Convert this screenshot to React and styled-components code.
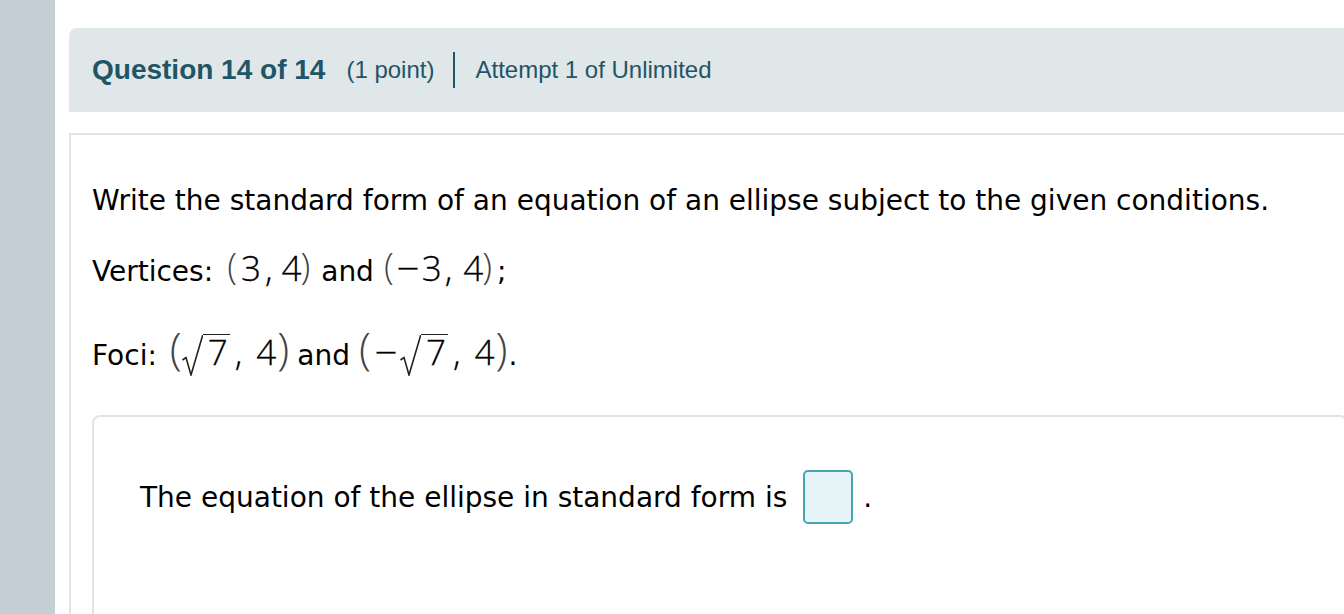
import React from 'react'
import styled, { createGlobalStyle } from 'styled-components'

const GlobalStyle = createGlobalStyle`
  html, body {
    margin: 0;
    padding: 0;
    background: #ffffff;
    overflow: hidden;
  }
`;

const Page = styled.div`
  display: flex;
  width: 1344px;
  height: 614px;
  overflow: hidden;
`;

const Sidebar = styled.div`
  width: 55px;
  flex: none;
  background: #c3cfd4;
`;

const Main = styled.div`
  flex: 1;
  padding: 28px 0 0 14px;
  display: flex;
  flex-direction: column;
  min-width: 0;
`;

const Header = styled.div`
  flex: none;
  height: 84px;
  background: #dfe7e9;
  border-top-left-radius: 8px;
  display: flex;
  align-items: center;
  padding-left: 23px;
  font-family: "Liberation Sans", Arial, sans-serif;
  color: #1f5566;
`;

const Title = styled.span`
  font-weight: bold;
  font-size: 28px;
`;

const Points = styled.span`
  font-size: 24px;
  margin-left: 21px;
`;

const Divider = styled.span`
  width: 2px;
  height: 36px;
  background: #1f5566;
  margin: 0 20px 0 19px;
`;

const Attempt = styled.span`
  font-size: 24px;
`;

const Panel = styled.div`
  margin-top: 21px;
  flex: 1;
  border-top: 2px solid #dfe6e8;
  border-left: 2px solid #dfe6e8;
  padding: 47px 0 0 21px;
  font-family: "DejaVu Sans", Verdana, sans-serif;
  font-size: 28px;
  color: #000;
`;

const Line = styled.div`
  height: 38px;
  line-height: 38px;
  margin: 0 0 ${p => p.gap}px 0;
  white-space: nowrap;
`;

const Math = styled.span`
  font-family: "Open Sans", "DejaVu Sans", sans-serif;
  font-weight: 300;
  font-size: 35px;
  line-height: 30px;
  color: #000;
  -webkit-text-stroke: 0.3px #000;
  margin: 0 ${p => p.mr ?? 8}px 0 ${p => p.ml ?? 12}px;
`;

const Paren = styled.span`
  display: inline-block;
  color: #444;
  -webkit-text-stroke: 0;
  font-size: ${p => p.size || 36}px;
  line-height: 30px;
  vertical-align: ${p => p.up || 0}px;
  margin: 0 ${p => p.r || 0}px 0 ${p => p.l || 0}px;
`;

const Comma = styled.span`
  margin: 0 ${p => p.r ?? 9}px 0 ${p => p.l ?? 4}px;
`;

const Minus = styled.span`
  display: inline-block;
  transform: scaleX(1.15);
  margin: 0 4px 0 1px;
`;

const RootSign = styled.svg`
  width: 21px;
  height: 41px;
  vertical-align: -11px;
`;

const Radicand = styled.span`
  display: inline-block;
  line-height: 33px;
  border-top: 1.6px solid #222;
  padding: 0 2px 0 5px;
`;

const AnswerCard = styled.div`
  margin-top: 44px;
  margin-right: -4px;
  height: 300px;
  border: 2px solid #dde5e8;
  border-radius: 8px;
  padding: 61px 0 0 46px;
`;

const AnswerLine = styled.div`
  display: flex;
  align-items: center;
  height: 38px;
  white-space: nowrap;
`;

const AnswerBox = styled.span`
  flex: none;
  width: 50px;
  height: 54px;
  box-sizing: border-box;
  margin: 0 10px 0 16px;
  background: #e6f4f8;
  border: 2px solid #4aa3b0;
  border-radius: 5px;
`;

const Sqrt = ({ children }) => (
  <>
    <RootSign viewBox="0 0 21 41">
      <path d="M0.5 25 L4 22.5 L9 40 L20.5 0.8 L21 0.8" fill="none" stroke="#222" strokeWidth="1.6" strokeLinejoin="miter" />
    </RootSign>
    <Radicand>{children}</Radicand>
  </>
);

const App = () => (
  <Page>
    <GlobalStyle />
    <Sidebar />
    <Main>
      <Header>
        <Title>Question 14 of 14</Title>
        <Points>(1 point)</Points>
        <Divider />
        <Attempt>Attempt 1 of Unlimited</Attempt>
      </Header>
      <Panel>
        <Line gap={31}>Write the standard form of an equation of an ellipse subject to the given conditions.</Line>
        <Line gap={44}>
          Vertices:
          <Math ml={14} mr={11}>
            <Paren up={2} r={4}>(</Paren>3<Comma>,</Comma>4<Paren up={2} l={-1}>)</Paren>
          </Math>
          and
          <Math ml={10} mr={5}>
            <Paren up={2} r={3}>(</Paren><Minus>−</Minus>3<Comma l={3} r={11}>,</Comma>4<Paren up={2} l={-1}>)</Paren>
          </Math>
          ;
        </Line>
        <Line gap={0}>
          Foci:
          <Math ml={13} mr={8}>
            <Paren size={44}>(</Paren><Sqrt>7</Sqrt><Comma l={5} r={14}>,</Comma>4<Paren size={44} l={1}>)</Paren>
          </Math>
          and
          <Math ml={9} mr={1}>
            <Paren size={44} r={4}>(</Paren><Minus>−</Minus><Sqrt>7</Sqrt><Comma l={5} r={14}>,</Comma>4<Paren size={44} l={1}>)</Paren>
          </Math>
          .
        </Line>
        <AnswerCard>
          <AnswerLine>
            The equation of the ellipse in standard form is
            <AnswerBox />
            .
          </AnswerLine>
        </AnswerCard>
      </Panel>
    </Main>
  </Page>
);

export default App
